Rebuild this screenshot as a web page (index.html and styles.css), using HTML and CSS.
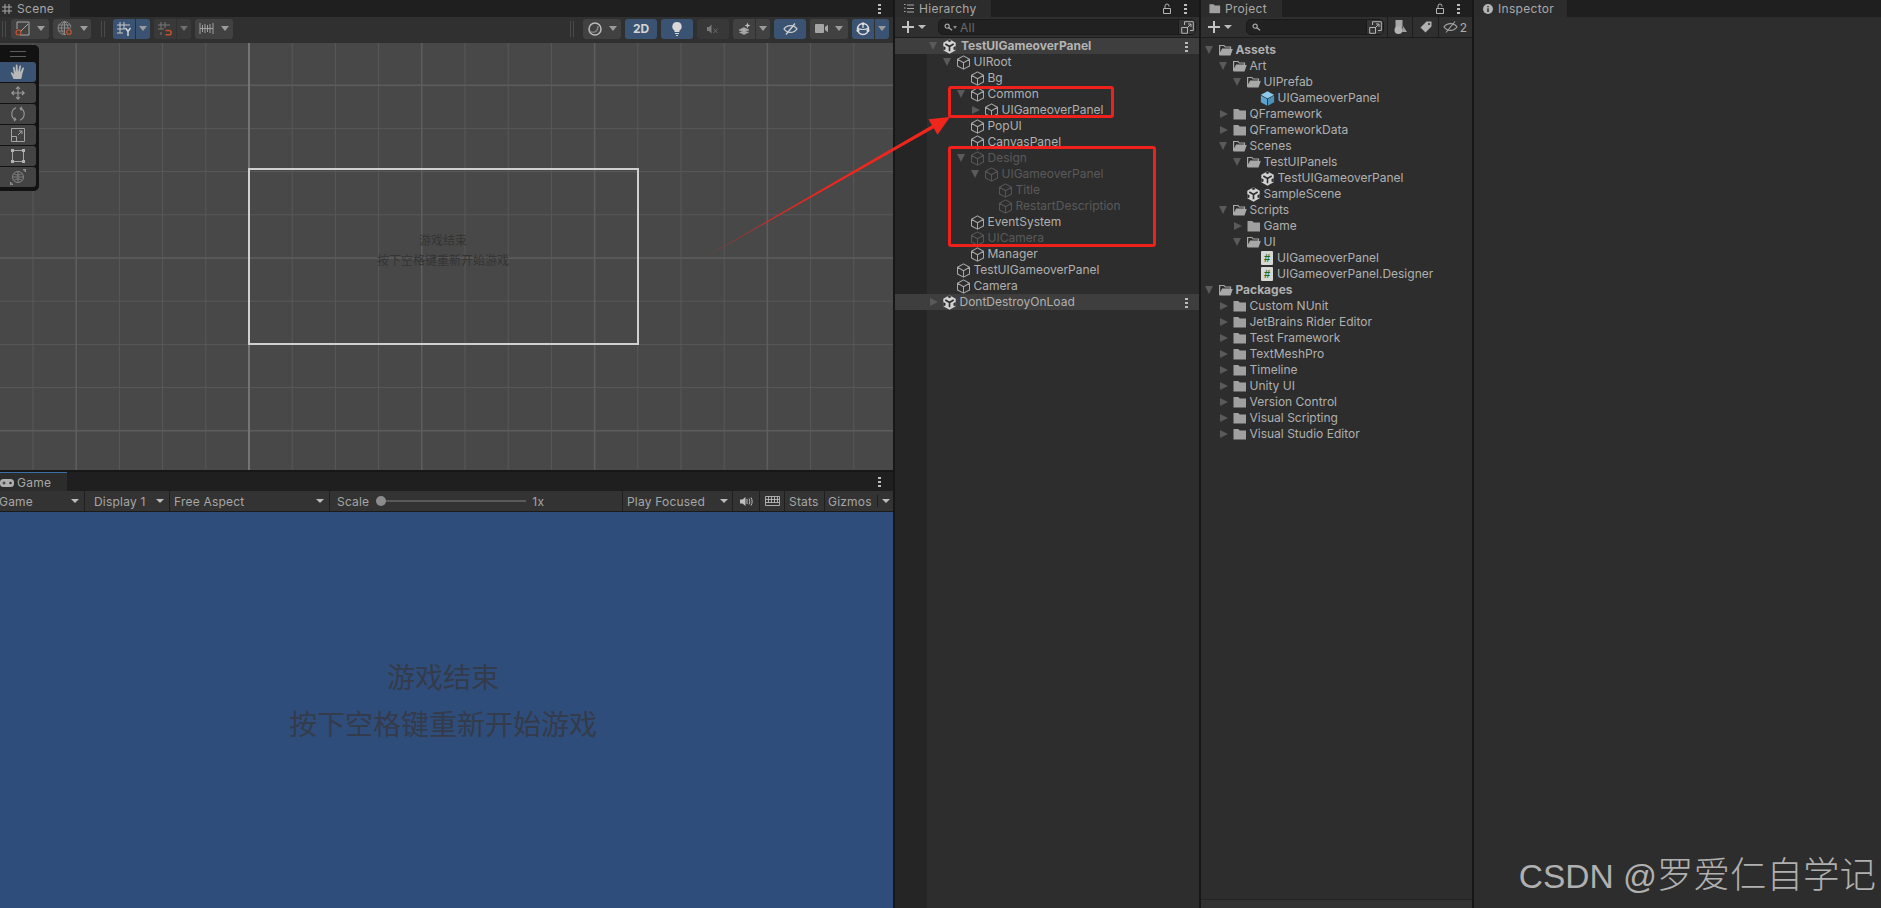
FILE: index.html
```html
<!DOCTYPE html>
<html lang="en">
<head>
<meta charset="utf-8">
<title>Unity Editor</title>
<link rel="stylesheet" href="styles.css">
</head>
<body>
<svg class="defs" width="0" height="0" aria-hidden="true">
  <defs>
    <symbol id="cube" viewBox="0 0 14 14"><path d="M7 .8 12.6 4v6.2L7 13.2 1.4 10.200V4ZM1.400 4 7 7.200 12.600 4M7 7.200v6" fill="none" stroke="currentColor" stroke-width=".95" stroke-linejoin="round"/></symbol>
    <symbol id="unity" viewBox="0 0 14 14"><path d="M7 .3 12.800 3.600V10.400L7 13.700 1.200 10.400V3.600Z" fill="#d2d2d2"/><path d="M7 7V11.500M7 7 3.100 4.700M7 7 10.900 4.700" stroke="#2d2d2d" stroke-width="1.500"/><path d="M7 .3 5.200 1.800 7 2.800 8.800 1.800ZM1.200 10.400 3.300 9.700V7.600L1.200 6.500ZM12.800 10.400 10.700 9.700V7.600L12.800 6.500Z" fill="#2d2d2d"/></symbol>
    <symbol id="prefab" viewBox="0 0 14 14"><path d="M7 .3 13.200 3.600 7 7 .8 3.600Z" fill="#8ccbea"/><path d="M.8 4.200 6.600 7.500V13.700L.8 10.500Z" fill="#5aa5cf"/><path d="M13.200 4.200 7.400 7.500V13.700L13.200 10.500Z" fill="#4a92bb"/></symbol>
    <symbol id="folder-open" viewBox="0 0 14 12"><path d="M.6 11V1.500H5L6.200 3H11.500V5H3.500L.6 11Z" fill="none" stroke="#a8a8a8" stroke-width="1.200"/><path d="M3.200 5H13.800L11.500 11.500H.6Z" fill="#a8a8a8"/></symbol>
    <symbol id="folder" viewBox="0 0 14 12"><path d="M.5 1H5.300L6.700 2.600H13V11.500H.5Z" fill="#a0a0a0"/></symbol>
    <symbol id="plus" viewBox="0 0 12 12"><path d="M6 0V12M0 6H12" stroke="#c4c4c4" stroke-width="2"/></symbol>
    <symbol id="lock" viewBox="0 0 10 11"><path d="M1.500 5.500H8.500V10.500H1.500ZM3 5.500V3A2 2 0 0 1 7 3V3.600" fill="none" stroke="#b4b4b4" stroke-width="1"/></symbol>
    <symbol id="mag" viewBox="0 0 10 10"><circle cx="3.500" cy="3.500" r="2.300" fill="none" stroke="#a8a8a8" stroke-width="1.300"/><path d="M5.300 5.300 9 8" stroke="#a8a8a8" stroke-width="1.500"/></symbol>
    <symbol id="expand" viewBox="0 0 13 13"><path d="M3.500 4V.7H12.300V9.500H9M.7 6.500H6.500V12.300H.7ZM6 7 10 3M7 3H10V6" fill="none" stroke="#b4b4b4" stroke-width="1"/></symbol>
  </defs>
</svg>

<div class="editor">
  <section class="left">
    <div class="tabbar">
      <div class="tab tab-scene">
        <svg class="tab-ic" width="10" height="10" viewBox="0 0 10 10"><path d="M3 0V10M7 0V10M0 3H10M0 7H10" stroke="#a8a8a8" stroke-width="1"/></svg>
        <span>Scene</span>
      </div>
      <div class="tab-end tab-end-left"><i class="dots"></i></div>
    </div>
    <div class="scene-toolbar">
      <i class="grip grip-first"></i>
      <div class="btn w38">
        <svg width="15" height="15" viewBox="0 0 15 15"><path d="M2 1H14V14H5M2 1V8M5 11 13 3" fill="none" stroke="#a8a8a8"/><circle cx="3.500" cy="11.500" r="2.500" fill="none" stroke="#d0562e" stroke-width="1.100"/></svg>
        <i class="caret"></i>
      </div>
      <div class="btn w38">
        <svg width="16" height="15" viewBox="0 0 16 15"><path d="M9 13.500A6.500 6.500 0 1 1 14 6M.8 7H14M1.500 4H13M1.500 10H8M7.500 .5V13.500M7.500 .5C3.500 4 3.500 10 7.500 13.500M7.500 .5C10.500 3 11 6 11 7.500" fill="none" stroke="#989898" stroke-width=".8"/><circle cx="12" cy="11" r="2.300" fill="none" stroke="#d0562e" stroke-width="1.100"/></svg>
        <i class="caret"></i>
      </div>
      <i class="grip grip-mid"></i>
      <div class="split">
        <div class="btn on w22"><svg width="14" height="14" viewBox="0 0 14 14"><path d="M3 0V11M7 0V7M0 3H13M0 7H8M0 11H6" stroke="#c8c8c8"/><path d="M8.500 6 11 9.500 13.500 6M11 9.500V14" fill="none" stroke="#d8d8d8" stroke-width="1.400"/></svg></div>
        <div class="btn on w14"><i class="caret"></i></div>
      </div>
      <div class="split">
        <div class="btn w22 dim"><svg width="14" height="14" viewBox="0 0 14 14"><path d="M3 0V7M7 0V6M0 3H12M0 7H6M3 10V13" stroke="#787878"/><path d="M7.500 8.500H11A2 2 0 0 1 11 12.800H7.500" fill="none" stroke="#c3502a" stroke-width="1.500"/></svg></div>
        <div class="btn w14 dim"><i class="caret caret-dim"></i></div>
      </div>
      <div class="btn w38">
        <svg width="15" height="13" viewBox="0 0 15 13"><path d="M1 1V12M14 1V12M3.500 3V10M6 2V11M8.500 3V10M11 2V11M1 6.500H14" fill="none" stroke="#a0a0a0"/></svg>
        <i class="caret"></i>
      </div>
      <div class="toolbar-fill"></div>
      <i class="grip"></i>
      <div class="btn w38 push-left">
        <svg width="14" height="14" viewBox="0 0 14 14"><circle cx="7" cy="7" r="6" fill="none" stroke="#bcbcbc" stroke-width="1.500"/><path d="M2 9C6 12 10 9.500 10 4" fill="none" stroke="#808080" stroke-width="1.500"/></svg>
        <i class="caret"></i>
      </div>
      <div class="btn on w32 label-2d">2D</div>
      <div class="btn on w32"><svg width="10" height="14" viewBox="0 0 10 14"><path d="M5 0A4.600 4.600 0 0 1 7.500 8.500V10H2.500V8.500A4.600 4.600 0 0 1 5 0ZM3 11H7V12H3ZM4 13H6V14H4Z" fill="#d8d8d8"/></svg></div>
      <div class="btn w32 dark"><svg width="12" height="10" viewBox="0 0 12 10"><path d="M0 3H2L4.500 .5V9.500L2 7H0Z" fill="#7a7a7a"/><path d="M6.500 4.500 10.500 9M10.500 4.500 6.500 9" stroke="#6a6a6a"/></svg></div>
      <div class="split">
        <div class="btn w22"><svg width="13" height="13" viewBox="0 0 13 13"><path d="M1 8 6 5.500 11 8 6 10.500ZM1 10 6 12.500 11 10" fill="#a8a8a8" stroke="#a8a8a8" stroke-width=".6"/><path d="M9.500 .5 10.300 2.700 12.500 3.500 10.300 4.300 9.500 6.500 8.700 4.300 6.500 3.500 8.700 2.700Z" fill="#c0c0c0"/></svg></div>
        <div class="btn w14"><i class="caret"></i></div>
      </div>
      <div class="btn on w32"><svg width="15" height="12" viewBox="0 0 15 12"><path d="M1 6C4 1.500 11 1.500 14 6 11 10.500 4 10.500 1 6Z" fill="none" stroke="#d0d0d0" stroke-width="1.300"/><path d="M3 11.500 12 .5" stroke="#d0d0d0" stroke-width="1.300"/></svg></div>
      <div class="btn w38">
        <svg width="13" height="9" viewBox="0 0 13 9"><rect x="0" y="0" width="9" height="9" rx="1" fill="#a4a4a4"/><path d="M10 3 13 .8V8.200L10 6Z" fill="#a4a4a4"/></svg>
        <i class="caret"></i>
      </div>
      <div class="split">
        <div class="btn on w22"><svg width="14" height="14" viewBox="0 0 14 14"><circle cx="7" cy="7" r="5.500" fill="none" stroke="#dcdcdc" stroke-width="1.400"/><path d="M1.500 6C4 8 10 8 12.500 6M7 1.500V6" fill="none" stroke="#dcdcdc" stroke-width="1.200"/><circle cx="7" cy="1.800" r="1.500" fill="#dcdcdc"/><circle cx="2" cy="8.500" r="1.500" fill="#dcdcdc"/><circle cx="12" cy="8.500" r="1.500" fill="#dcdcdc"/></svg></div>
        <div class="btn on w14"><i class="caret"></i></div>
      </div>
    </div>

    <div class="scene-view">
      <svg class="grid" width="893" height="427" viewBox="0 0 893 427">
        <path d="M33 0V427M119.400 0V427M162.600 0V427M205.800 0V427M292.200 0V427M335.400 0V427M378.600 0V427M465 0V427M508.200 0V427M551.400 0V427M637.800 0V427M681 0V427M724.200 0V427M810.600 0V427M853.800 0V427M0 85.400H893M0 128.600H893M0 171.800H893M0 258.200H893M0 301.400H893M0 344.600H893" stroke="#595959" stroke-width="1" fill="none"/>
        <path d="M76.200 0V427M421.800 0V427M594.600 0V427M767.400 0V427M0 42.200H893M0 215H893M0 387.800H893" stroke="#5d5d5d" stroke-width="1.600" fill="none"/>
        <path d="M249 0V427" stroke="#747474" stroke-width="2" fill="none"/>
      </svg>
      <div class="canvas-rect"></div>
      <div class="scene-text">
        <div class="st-line">游戏结束</div>
        <div class="st-line">按下空格键重新开始游戏</div>
      </div>
      <div class="tools">
        <div class="tools-handle"></div>
        <div class="tool on"><svg width="16" height="16" viewBox="0 0 16 16"><path d="M3.500 15C2.500 12 .5 9.500 .8 8.600 1.400 7.600 3 9 4 10.500L3 3.500C3 2.500 4.300 2.500 4.600 3.500L5.800 8 5.800 1.500C5.800.3 7.400.3 7.500 1.500L8 8 9.500 1.800C9.800.8 11.200 1 11 2.200L10 8.500 12.500 3.800C13.100 3 14.300 3.600 14 4.500L12 11C12 13 11.500 14 11 15Z" fill="#b8b8b8"/></svg></div>
        <div class="tool"><svg width="16" height="16" viewBox="0 0 16 16"><path d="M8 2V14M2 8H14M6 4 8 1.800 10 4M6 12 8 14.200 10 12M4 6 1.800 8 4 10M12 6 14.200 8 12 10" fill="none" stroke="#9a9a9a" stroke-width="1.100"/></svg></div>
        <div class="tool"><svg width="16" height="16" viewBox="0 0 16 16"><path d="M5.500 14A6.700 6.700 0 0 1 6 1.800M4 15 5.800 13.500 4.500 11.500M10.500 2A6.700 6.700 0 0 1 10 14.200M12 1 10.200 2.500 11.500 4.500" fill="none" stroke="#9a9a9a" stroke-width="1.100"/></svg></div>
        <div class="tool"><svg width="14" height="14" viewBox="0 0 14 14"><path d="M.5.500H13.500V13.500H.5ZM.5 8.500H5.500V13.500M7 7 11 3M8 3H11V6" fill="none" stroke="#a4a4a4"/></svg></div>
        <div class="tool"><svg width="14" height="14" viewBox="0 0 14 14"><path d="M3 1.500H11M3 12.500H11M1.500 3V11M12.500 3V11" stroke="#a4a4a4"/><path d="M0 0H3V3H0ZM11 0H14V3H11ZM0 11H3V14H0ZM11 11H14V14H11Z" fill="#b4b4b4"/></svg></div>
        <div class="tool"><svg width="16" height="16" viewBox="0 0 16 16"><circle cx="8" cy="8" r="5.500" fill="none" stroke="#858585"/><path d="M2.500 8H13.500M8 2.500V13.500M4 4.500C6 6.500 10 6.500 12 4.500M4 11.500C6 9.500 10 9.500 12 11.500" fill="none" stroke="#858585" stroke-width=".9"/><path d="M0 16V13H1.500V14.500H3V16ZM16 0V3H14.500V1.500H13V0Z" fill="#8a8a8a"/></svg></div>
      </div>
    </div>

    <div class="pane-gap"></div>

    <div class="tabbar tabbar-game">
      <div class="tab tab-game">
        <svg class="game-ic" width="14" height="8" viewBox="0 0 14 8"><rect width="14" height="8" rx="3.500" fill="#b0b0b0"/><path d="M2.500 4H5.500M4 2.500V5.500" stroke="#2c2c2c"/><circle cx="10.500" cy="4" r="1.200" fill="#2c2c2c"/></svg>
        <span>Game</span>
      </div>
      <div class="tab-end tab-end-left"><i class="dots"></i></div>
    </div>
    <div class="game-toolbar">
      <div class="seg seg-game"><span>Game</span><i class="caret caret-light"></i></div>
      <div class="seg seg-display"><span>Display 1</span><i class="caret caret-light"></i></div>
      <div class="seg seg-aspect"><span>Free Aspect</span><i class="caret caret-light"></i></div>
      <div class="seg seg-scale">
        <span>Scale</span>
        <div class="slider"><i class="thumb"></i></div>
        <span>1x</span>
      </div>
      <div class="seg seg-play"><span>Play Focused</span><i class="caret caret-light"></i></div>
      <div class="seg seg-icon seg-audio"><svg width="13" height="9" viewBox="0 0 13 9"><path d="M0 2.500H2.500L5.500 0V9L2.500 6.500H0Z" fill="#c0c0c0"/><path d="M7 2V7M9 1.500C10 3 10 6 9 7.500M11 .5C12.500 3 12.500 6 11 8.500" fill="none" stroke="#c0c0c0"/></svg></div>
      <div class="seg seg-icon seg-keys"><svg width="15" height="10" viewBox="0 0 15 10"><path d="M.5.500H14.500V9.500H.5ZM.5 3.500H14.500M.5 6.500H14.500M3.500.5V6.500M6.500.5V6.500M9.500.5V6.500M12.500.5V6.500" fill="none" stroke="#b8b8b8" stroke-width=".9"/></svg></div>
      <div class="seg seg-stats"><span>Stats</span></div>
      <div class="seg-gizmos"><span>Gizmos</span><i class="thin-sep"></i><i class="caret caret-light"></i></div>
    </div>
    <div class="game-view">
      <div class="gv-line">游戏结束</div>
      <div class="gv-line">按下空格键重新开始游戏</div>
    </div>
  </section>

  <section class="panel hierarchy">
    <div class="tabbar">
      <div class="tab tab-hier">
        <svg class="tab-ic" width="10" height="9" viewBox="0 0 10 9"><path d="M3 1H10M3 4.500H10M3 8H10" stroke="#a8a8a8"/><path d="M0 .5H1.500M0 4H1.500M0 7.500H1.500" stroke="#a8a8a8"/></svg>
        <span>Hierarchy</span>
      </div>
      <div class="tab-end"><svg class="lock" width="10" height="11"><use href="#lock"/></svg><i class="dots"></i></div>
    </div>
    <div class="tree-toolbar">
      <div class="add"><svg width="12" height="12"><use href="#plus"/></svg><i class="caret caret-light"></i></div>
      <div class="search search-hier">
        <svg class="mag" width="9" height="9"><use href="#mag"/></svg><i class="mini-caret"></i><span class="search-hint">All</span>
        <div class="search-end"><svg width="13" height="13"><use href="#expand"/></svg></div>
      </div>
    </div>
    <div class="tree tree-hier">
      <div class="row scene-row h0"><i class="tw open"></i><svg class="ic"><use href="#unity"/></svg><b class="root-name">TestUIGameoverPanel</b><i class="dots row-dots"></i></div>
      <div class="row h1"><i class="tw open"></i><svg class="ic"><use href="#cube"/></svg><span>UIRoot</span></div>
      <div class="row h2"><i class="tw"></i><svg class="ic"><use href="#cube"/></svg><span>Bg</span></div>
      <div class="row h2"><i class="tw open"></i><svg class="ic"><use href="#cube"/></svg><span>Common</span></div>
      <div class="row h3"><i class="tw closed"></i><svg class="ic"><use href="#cube"/></svg><span>UIGameoverPanel</span></div>
      <div class="row h2"><i class="tw"></i><svg class="ic"><use href="#cube"/></svg><span>PopUI</span></div>
      <div class="row h2"><i class="tw"></i><svg class="ic"><use href="#cube"/></svg><span>CanvasPanel</span></div>
      <div class="row h2 off"><i class="tw open"></i><svg class="ic"><use href="#cube"/></svg><span>Design</span></div>
      <div class="row h3 off"><i class="tw open"></i><svg class="ic"><use href="#cube"/></svg><span>UIGameoverPanel</span></div>
      <div class="row h4 off"><i class="tw"></i><svg class="ic"><use href="#cube"/></svg><span>Title</span></div>
      <div class="row h4 off"><i class="tw"></i><svg class="ic"><use href="#cube"/></svg><span>RestartDescription</span></div>
      <div class="row h2"><i class="tw"></i><svg class="ic"><use href="#cube"/></svg><span>EventSystem</span></div>
      <div class="row h2 off"><i class="tw"></i><svg class="ic"><use href="#cube"/></svg><span>UICamera</span></div>
      <div class="row h2"><i class="tw"></i><svg class="ic"><use href="#cube"/></svg><span>Manager</span></div>
      <div class="row h1"><i class="tw"></i><svg class="ic"><use href="#cube"/></svg><span>TestUIGameoverPanel</span></div>
      <div class="row h1"><i class="tw"></i><svg class="ic"><use href="#cube"/></svg><span>Camera</span></div>
      <div class="row scene-row h0"><i class="tw closed"></i><svg class="ic"><use href="#unity"/></svg><span class="root-plain">DontDestroyOnLoad</span><i class="dots row-dots"></i></div>
    </div>
  </section>

  <section class="panel project">
    <div class="tabbar">
      <div class="tab tab-proj">
        <svg class="tab-ic" width="12" height="11" viewBox="0 0 14 12"><use href="#folder"/></svg>
        <span>Project</span>
      </div>
      <div class="tab-end"><svg class="lock" width="10" height="11"><use href="#lock"/></svg><i class="dots"></i></div>
    </div>
    <div class="tree-toolbar">
      <div class="add"><svg width="12" height="12"><use href="#plus"/></svg><i class="caret caret-light"></i></div>
      <div class="search search-proj">
        <svg class="mag" width="9" height="9"><use href="#mag"/></svg>
        <div class="search-end"><svg width="13" height="13"><use href="#expand"/></svg></div>
      </div>
      <div class="proj-btn pb-filter"><svg width="13" height="14" viewBox="0 0 13 14"><rect x="1.500" y="0" width="7" height="7" fill="#a8a8a8"/><circle cx="4.500" cy="10" r="4" fill="#b4b4b4"/><path d="M9 6 13 12H8Z" fill="#a0a0a0"/></svg></div>
      <div class="proj-btn pb-tag"><svg width="12" height="12" viewBox="0 0 12 12"><path d="M6.500.5H11.500V5.500L5.500 11.500.5 6.500Z" fill="#b0b0b0"/><circle cx="9" cy="3" r="1" fill="#2d2d2d"/></svg></div>
      <div class="proj-btn pb-eye"><svg width="15" height="12" viewBox="0 0 15 12"><path d="M1 6C4 1.500 11 1.500 14 6 11 10.500 4 10.500 1 6Z" fill="none" stroke="#a4a4a4" stroke-width="1.100"/><path d="M3 11.500 12 .5" stroke="#a4a4a4" stroke-width="1.100"/></svg><span>2</span></div>
    </div>
    <div class="tree tree-proj">
      <div class="row p0"><i class="tw open"></i><svg class="fic" viewBox="0 0 14 12"><use href="#folder-open"/></svg><b class="asset-root">Assets</b></div>
      <div class="row p1"><i class="tw open"></i><svg class="fic" viewBox="0 0 14 12"><use href="#folder-open"/></svg><span>Art</span></div>
      <div class="row p2"><i class="tw open"></i><svg class="fic" viewBox="0 0 14 12"><use href="#folder-open"/></svg><span>UIPrefab</span></div>
      <div class="row p3"><i class="tw"></i><svg class="ic"><use href="#prefab"/></svg><span>UIGameoverPanel</span></div>
      <div class="row p1"><i class="tw closed"></i><svg class="fic" viewBox="0 0 14 12"><use href="#folder"/></svg><span>QFramework</span></div>
      <div class="row p1"><i class="tw closed"></i><svg class="fic" viewBox="0 0 14 12"><use href="#folder"/></svg><span>QFrameworkData</span></div>
      <div class="row p1"><i class="tw open"></i><svg class="fic" viewBox="0 0 14 12"><use href="#folder-open"/></svg><span>Scenes</span></div>
      <div class="row p2"><i class="tw open"></i><svg class="fic" viewBox="0 0 14 12"><use href="#folder-open"/></svg><span>TestUIPanels</span></div>
      <div class="row p3"><i class="tw"></i><svg class="ic"><use href="#unity"/></svg><span>TestUIGameoverPanel</span></div>
      <div class="row p2"><i class="tw"></i><svg class="ic"><use href="#unity"/></svg><span>SampleScene</span></div>
      <div class="row p1"><i class="tw open"></i><svg class="fic" viewBox="0 0 14 12"><use href="#folder-open"/></svg><span>Scripts</span></div>
      <div class="row p2"><i class="tw closed"></i><svg class="fic" viewBox="0 0 14 12"><use href="#folder"/></svg><span>Game</span></div>
      <div class="row p2"><i class="tw open"></i><svg class="fic" viewBox="0 0 14 12"><use href="#folder-open"/></svg><span>UI</span></div>
      <div class="row p3"><i class="tw"></i><i class="script-ic">#</i><span>UIGameoverPanel</span></div>
      <div class="row p3"><i class="tw"></i><i class="script-ic">#</i><span>UIGameoverPanel.Designer</span></div>
      <div class="row p0"><i class="tw open"></i><svg class="fic" viewBox="0 0 14 12"><use href="#folder-open"/></svg><b class="asset-root">Packages</b></div>
      <div class="row p1"><i class="tw closed"></i><svg class="fic" viewBox="0 0 14 12"><use href="#folder"/></svg><span>Custom NUnit</span></div>
      <div class="row p1"><i class="tw closed"></i><svg class="fic" viewBox="0 0 14 12"><use href="#folder"/></svg><span>JetBrains Rider Editor</span></div>
      <div class="row p1"><i class="tw closed"></i><svg class="fic" viewBox="0 0 14 12"><use href="#folder"/></svg><span>Test Framework</span></div>
      <div class="row p1"><i class="tw closed"></i><svg class="fic" viewBox="0 0 14 12"><use href="#folder"/></svg><span>TextMeshPro</span></div>
      <div class="row p1"><i class="tw closed"></i><svg class="fic" viewBox="0 0 14 12"><use href="#folder"/></svg><span>Timeline</span></div>
      <div class="row p1"><i class="tw closed"></i><svg class="fic" viewBox="0 0 14 12"><use href="#folder"/></svg><span>Unity UI</span></div>
      <div class="row p1"><i class="tw closed"></i><svg class="fic" viewBox="0 0 14 12"><use href="#folder"/></svg><span>Version Control</span></div>
      <div class="row p1"><i class="tw closed"></i><svg class="fic" viewBox="0 0 14 12"><use href="#folder"/></svg><span>Visual Scripting</span></div>
      <div class="row p1"><i class="tw closed"></i><svg class="fic" viewBox="0 0 14 12"><use href="#folder"/></svg><span>Visual Studio Editor</span></div>
    </div>
    <div class="project-foot"></div>
  </section>

  <section class="panel inspector">
    <div class="tabbar">
      <div class="tab tab-insp">
        <svg class="tab-ic" width="10" height="10" viewBox="0 0 10 10"><circle cx="5" cy="5" r="5" fill="#b4b4b4"/><path d="M5 4.200V8M5 2V3.200" stroke="#2c2c2c" stroke-width="1.500"/></svg>
        <span>Inspector</span>
      </div>
    </div>
  </section>
</div>

<div class="mark mark-common"></div>
<div class="mark mark-design"></div>
<svg class="arrow" width="1881" height="908" viewBox="0 0 1881 908">
  <defs><linearGradient id="arrow-fade" gradientUnits="userSpaceOnUse" x1="702" y1="259" x2="830" y2="185"><stop offset="0" stop-color="#a8342c"/><stop offset="1" stop-color="#f0261c"/></linearGradient></defs>
  <polygon points="702,259 932,125.200 928.500,119.200 950,117 937.500,134.700 933.800,128.300" fill="url(#arrow-fade)"/>
</svg>
<div class="watermark">CSDN @<span class="wm-cjk">罗爱仁自学记</span></div>
</body>
</html>
```

FILE: styles.css
```css
* { box-sizing: border-box; }
html, body { margin: 0; padding: 0; }
body {
  width: 1881px;
  height: 908px;
  overflow: hidden;
  background: #171717;
  font-family: Inter, "Noto Sans CJK SC", sans-serif;
  font-size: 12px;
  color: #aeaeae;
  position: relative;
}
i { display: block; font-style: normal; }
svg { display: block; flex: none; }
.defs { position: absolute; }

.editor {
  display: grid;
  grid-template-columns: 893px 304px 271px 407px;
  column-gap: 2px;
  height: 908px;
}
.left, .panel { display: flex; flex-direction: column; height: 908px; background: #2d2d2d; min-width: 0; overflow: hidden; }

/* tabs */
.tabbar { display: flex; height: 17px; background: #1f1f1f; flex: none; }
.tab { display: flex; align-items: center; background: #2c2c2c; height: 17px; color: #a8a8a8; letter-spacing: .3px; line-height: 17px; }
.tab-scene { width: 70px; padding-left: 2px; }
.tab-scene .tab-ic { margin-right: 5px; }
.tab-hier { width: 96px; padding-left: 9px; }
.tab-hier .tab-ic { margin-right: 5px; }
.tab-proj { width: 81px; padding-left: 8px; }
.tab-proj .tab-ic { margin-right: 4px; }
.tab-insp { width: 93px; padding-left: 9px; }
.tab-insp .tab-ic { margin-right: 5px; }
.tab-end { margin-left: auto; display: flex; align-items: center; gap: 12px; padding-right: 12px; }
.tab-end-left { padding-right: 12px; }
.dots { width: 3px; height: 11px; background: radial-gradient(circle at center, #bcbcbc 1.3px, transparent 1.5px) 0 0 / 3px 4px repeat-y; }

.tabbar-game { height: 19px; }
.tab-game { width: 67px; height: 19px; border-top: 1px solid #3a6ea5; padding-top: 1px; }
.game-ic { margin-left: 0; margin-right: 3px; }

/* scene toolbar */
.scene-toolbar { display: flex; align-items: center; gap: 4px; height: 26px; padding: 0 4px 3px 2px; background: #303030; flex: none; }
.grip { width: 4px; height: 16px; border-left: 1px solid #4a4a4a; border-right: 1px solid #4a4a4a; flex: none; }
.grip-first { margin-right: 1px; }
.grip-mid { margin: 0 4px 0 6px; }
.toolbar-fill { flex: 1; }
.push-left { margin-left: 5px; }
.btn { height: 20px; background: #414141; border-radius: 3px; display: flex; align-items: center; justify-content: center; gap: 7px; flex: none; }
.btn.on { background: #3b5373; }
.btn.dim { background: #393939; }
.btn.dark { background: #383838; }
.w38 { width: 38px; }
.w32 { width: 32px; }
.w22 { width: 22px; border-radius: 3px 0 0 3px; }
.w14 { width: 14px; border-radius: 0 3px 3px 0; }
.split { display: flex; gap: 1px; flex: none; }
.label-2d { font-weight: 700; font-size: 12px; color: #d4d4d4; }
.caret { width: 0; height: 0; border-left: 4px solid transparent; border-right: 4px solid transparent; border-top: 5px solid #9c9c9c; flex: none; }
.caret-dim { border-top-color: #6e6e6e; }
.caret-light { border-top-color: #bcbcbc; border-left-width: 4px; border-right-width: 4px; border-top-width: 4px; }

/* scene */
.scene-view { position: relative; height: 427px; background: #484848; flex: none; overflow: hidden; }
.grid { position: absolute; left: 0; top: 0; }
.canvas-rect { position: absolute; left: 248px; top: 125px; width: 391px; height: 177px; border: 2px solid #d0d0d0; }
.scene-text { position: absolute; left: 343px; top: 187px; width: 200px; text-align: center; font-family: "Noto Sans CJK SC", sans-serif; font-size: 12px; line-height: 20px; color: #343434; }
.tools { position: absolute; left: 0; top: 2px; width: 39px; height: 146px; background: #121212; border-radius: 0 5px 5px 0; padding-right: 3px; }
.tools-handle { height: 17px; margin-left: 10px; width: 16px; position: relative; }
.tools-handle::before { content: ""; position: absolute; left: 0; top: 6px; width: 16px; height: 4px; border-top: 1px solid #5e5e5e; border-bottom: 1px solid #5e5e5e; }
.tool { height: 20px; margin-bottom: 1px; background: #434343; border-radius: 0 3px 3px 0; display: flex; align-items: center; justify-content: center; padding-left: 0; }
.tool.on { background: #3b5373; }

.pane-gap { height: 2px; background: #171717; flex: none; }

/* game */
.game-toolbar { display: flex; height: 21px; background: #333; border-bottom: 1px solid #1b1b1b; flex: none; color: #a6a6a6; }
.seg { height: 20px; display: flex; align-items: center; justify-content: space-between; border-right: 1px solid #1f1f1f; padding-right: 5px; letter-spacing: .2px; flex: none; }
.seg-game { width: 86px; margin-left: -1px; }
.seg-display { width: 85px; padding-left: 9px; }
.seg-aspect { width: 160px; padding-left: 4px; }
.seg-scale { width: 293px; padding-left: 7px; padding-right: 80px; justify-content: flex-start; gap: 0; }
.slider { width: 150px; height: 2px; background: #5a5a5a; position: relative; margin: 0 6px 0 7px; flex: none; }
.thumb { position: absolute; left: 0; top: -4px; width: 10px; height: 10px; border-radius: 50%; background: #8c8c8c; }
.seg-play { width: 110px; padding-left: 4px; padding-right: 4px; }
.seg-icon { justify-content: center; padding: 0; }
.seg-audio { width: 27px; }
.seg-keys { width: 25px; }
.seg-stats { width: 40px; padding: 0 0 0 4px; }
.seg-gizmos { flex: 1; display: flex; align-items: center; height: 20px; padding-left: 3px; letter-spacing: .2px; }
.thin-sep { width: 1px; height: 12px; background: #1f1f1f; margin: 0 4px 0 5px; }
.game-view { flex: 1; background: #2f4d7a; display: flex; flex-direction: column; align-items: center; padding: 141px 7px 0 0; font-family: "Noto Sans CJK SC", sans-serif; font-size: 28px; line-height: 47px; color: #343b4a; }

/* tree panels */
.tree-toolbar { display: flex; align-items: center; height: 21px; background: #2f2f2f; border-bottom: 1px solid #1c1c1c; flex: none; }
.add { width: 43px; padding-left: 7px; display: flex; align-items: center; gap: 4px; flex: none; }
.search { height: 16px; background: #212121; border: 1px solid #1a1a1a; border-radius: 5px; display: flex; align-items: center; position: relative; flex: none; padding-left: 5px; }
.search-hier { width: 258px; }
.search-proj { width: 138px; margin-left: 2px; }
.mag { flex: none; }
.mini-caret { width: 0; height: 0; border-left: 2px solid transparent; border-right: 2px solid transparent; border-top: 3px solid #8a8a8a; margin-left: 0; }
.search-hint { color: #6a6a6a; margin-left: 3px; letter-spacing: .3px; }
.search-end { margin-left: auto; width: 17px; height: 14px; background: #333; border-radius: 0 4px 4px 0; border-left: 1px solid #1a1a1a; display: flex; align-items: center; justify-content: center; }
.proj-btn { height: 20px; display: flex; align-items: center; justify-content: center; border-left: 1px solid #1c1c1c; flex: none; }
.pb-filter { width: 25px; margin-left: 3px; }
.pb-tag { width: 26px; }
.pb-eye { width: 33px; gap: 2px; padding-left: 0; }

.tree { flex: 1; min-height: 0; }
.tree-hier { background: linear-gradient(to right, #252525 32px, #2d2d2d 32px); }
.tree-proj { padding-top: 4px; }
.row { display: flex; align-items: center; height: 16px; white-space: nowrap; color: #b0b0b0; }
.row > span, .row > b { position: relative; top: -1px; }
.row.off { color: #5a5a5a; }
.scene-row { background: #3e3e3e; }
.h0 { padding-left: 31px; } .h1 { padding-left: 45px; } .h2 { padding-left: 59px; } .h3 { padding-left: 73px; } .h4 { padding-left: 87px; }
.p0 { padding-left: 1px; } .p1 { padding-left: 15px; } .p2 { padding-left: 29px; } .p3 { padding-left: 43px; }
.tw { width: 14px; height: 16px; flex: none; position: relative; }
.tw.open::before { content: ""; position: absolute; left: 3px; top: 4px; border-left: 4px solid transparent; border-right: 4px solid transparent; border-top: 8px solid #5a5a5a; }
.tw.closed::before { content: ""; position: absolute; left: 4px; top: 4px; border-top: 4px solid transparent; border-bottom: 4px solid transparent; border-left: 8px solid #5a5a5a; }
.ic { width: 15px; height: 15px; margin: 0 3px 0 1.5px; color: #a8a8a8; }
.off .ic { color: #565656; }
.fic { width: 14px; height: 12px; margin: 0 2.5px 0 3px; }
.root-name { font-weight: 700; color: #b4b4b4; margin-left: 1.5px; }
.root-plain { color: #b0b0b0; }
.row-dots { margin-left: auto; margin-right: 11px; }
.asset-root { font-weight: 700; color: #b0b0b0; }
.script-ic { width: 12px; height: 14px; margin: 0 4px 0 3px; background: #d4d9d4; border-radius: 1px; color: #1f6b24; font-weight: 700; font-size: 11px; line-height: 14px; text-align: center; font-family: "Liberation Sans", sans-serif; }

.project-foot { height: 9px; background: #333; border-top: 1px solid #232323; flex: none; }
.inspector { background: #2d2d2d; }

/* annotations */
.mark { position: absolute; border: 3px solid #f0201a; border-radius: 3px; }
.mark-common { left: 948px; top: 86px; width: 166px; height: 32px; }
.mark-design { left: 948px; top: 146px; width: 208px; height: 101px; }
.arrow { position: absolute; left: 0; top: 0; pointer-events: none; }
.watermark { position: absolute; right: 5px; top: 850px; font-family: "Liberation Sans", "Noto Sans CJK SC", sans-serif; font-size: 33.5px; line-height: 46px; color: #b0b0b0; white-space: nowrap; }
.wm-cjk { font-family: "Noto Sans CJK SC", sans-serif; font-size: 36.500px; font-weight: 300; }
```
